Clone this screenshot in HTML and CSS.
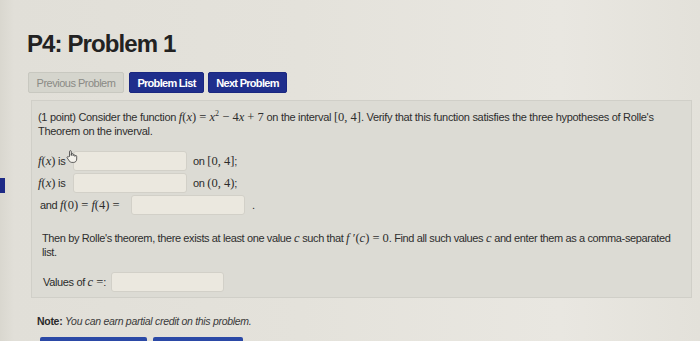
FILE: index.html
```html
<!DOCTYPE html>
<html lang="en">
<head>
<meta charset="utf-8">
<title>P4: Problem 1</title>
<link rel="stylesheet" href="styles.css">
</head>
<body>
<div class="edge-mark"></div>
<div class="page">
  <h1 class="title">P4: Problem 1</h1>
  <div class="nav">
    <span class="btn btn-disabled">Previous Problem</span>
    <span class="btn btn-primary btn-list">Problem List</span>
    <span class="btn btn-primary btn-next">Next Problem</span>
  </div>
  <div class="problem">
    <p class="para">(1 point) Consider the function <span class="m"><i>f</i>(<i>x</i>) = <i>x</i><sup>2</sup> − 4<i>x</i> + 7</span> on the interval <span class="m">[0, 4]</span>. Verify that this function satisfies the three hypotheses of Rolle's<br>Theorem on the inverval.</p>
    <div class="rows">
      <div class="row">
        <span class="lbl lbl-f"><span class="m"><i>f</i>(<i>x</i>)</span> is<svg class="cursor" width="12" height="13" viewBox="0 0 12 13"><path d="M3.5 6.5 V1.6 a0.9 0.9 0 0 1 1.8 0 V5.5 V4.4 a0.9 0.9 0 0 1 1.8 0 V5.6 a0.9 0.9 0 0 1 1.8 0 V6.4 a0.9 0.9 0 0 1 1.8 0 V9 c0 2 -1.2 3.4 -3 3.4 H5.6 c-1 0 -1.6 -0.5 -2.2 -1.3 L1.2 7.9 a0.9 0.9 0 0 1 1.4 -1.1 Z" fill="#f4f2ec" stroke="#3a3a3a" stroke-width="0.8"/></svg></span>
        <span class="ans ans-wide"></span>
        <span class="after">on <span class="m">[0, 4]</span>;</span>
      </div>
      <div class="row">
        <span class="lbl lbl-f"><span class="m"><i>f</i>(<i>x</i>)</span> is</span>
        <span class="ans ans-wide"></span>
        <span class="after">on <span class="m">(0, 4)</span>;</span>
      </div>
      <div class="row">
        <span class="lbl lbl-and">and <span class="m"><i>f</i>(0) = <i>f</i>(4) =</span></span>
        <span class="ans ans-wide"></span>
        <span class="after dot">.</span>
      </div>
    </div>
    <p class="para para-2">Then by Rolle's theorem, there exists at least one value <span class="m"><i>c</i></span> such that <span class="m"><i>f</i> ′(<i>c</i>) = 0</span>. Find all such values <span class="m"><i>c</i></span> and enter them as a comma-separated<br>list.</p>
    <div class="row row-values">
      <span class="lbl">Values of <span class="m"><i>c</i> =</span>:</span>
      <span class="ans ans-values"></span>
    </div>
  </div>
  <p class="note"><b>Note:</b> <i>You can earn partial credit on this problem.</i></p>
  <div class="actions">
    <span class="abtn abtn-1"></span>
    <span class="abtn abtn-2"></span>
  </div>
</div>
</body>
</html>
```
FILE: styles.css
```css
html, body {
  margin: 0;
  padding: 0;
}
body {
  width: 700px;
  height: 341px;
  overflow: hidden;
  background: linear-gradient(90deg, #d9d7cf 0px, #e1dfd8 14px, #e4e2db 300px, #e9e7e1 560px, #e3e1da 700px);
  font-family: "Liberation Sans", Arial, sans-serif;
  color: #2b2b2b;
  position: relative;
}
.edge-mark {
  position: absolute;
  left: 0;
  top: 178px;
  width: 5px;
  height: 15px;
  background: #1d2a86;
}
.page {
  padding: 30px 0 0 27px;
}
.title {
  margin: 0;
  font-size: 24px;
  line-height: 28px;
  font-weight: bold;
  letter-spacing: -0.9px;
  color: #222;
}
.nav {
  display: flex;
  gap: 5px;
  margin-top: 14px;
  margin-left: 1px;
}
.btn {
  height: 21px;
  box-sizing: border-box;
  display: flex;
  align-items: center;
  justify-content: center;
  padding: 0;
  font-size: 11px;
  border-radius: 2px;
}
.btn-disabled {
  background: #d5d5cd;
  border: 1px solid #c8c8c0;
  color: #8a8a85;
  width: 96px;
  letter-spacing: -0.5px;
}
.btn-primary {
  background: #1f2e8c;
  border: 1px solid #1a2780;
  color: #fff;
  font-weight: bold;
  letter-spacing: -0.7px;
}
.btn-list {
  width: 75px;
}
.btn-next {
  width: 79px;
  margin-left: -1px;
}
.problem {
  margin: 7px 8px 0 4px;
  background: #dcdbd4;
  border: 1px solid #d0cfc8;
  padding: 9px 6px 5px 6px;
  width: 647px;
}
.para {
  margin: 0;
  font-size: 11px;
  line-height: 14px;
  letter-spacing: -0.3px;
  color: #2e2e2e;
}
.m {
  font-family: "Liberation Serif", "Times New Roman", serif;
  font-size: 12.5px;
  letter-spacing: 0;
}
.m sup {
  font-size: 8px;
  line-height: 0;
}
.rows {
  margin-top: 13px;
  display: flex;
  flex-direction: column;
  gap: 2px;
}
.row {
  display: flex;
  align-items: center;
  height: 20px;
  font-size: 11px;
  letter-spacing: -0.35px;
}
.lbl {
  position: relative;
}
.lbl-f {
  width: 35px;
}
.lbl-and {
  margin-left: 2px;
  width: 91px;
}
.cursor {
  position: absolute;
  left: 28px;
  top: -4px;
}
.ans {
  display: block;
  height: 20px;
  box-sizing: border-box;
  background: #ebe8df;
  border: 1px solid #d2d0c8;
  border-radius: 3px;
}
.ans-wide {
  width: 114px;
}
.after {
  margin-left: 6px;
}
.dot {
  margin-left: 7px;
}
.para-2 {
  margin-top: 16px;
  margin-left: 4px;
  letter-spacing: -0.38px;
}
.row-values {
  margin-top: 13px;
  margin-left: 5px;
}
.row-values .lbl {
  width: 68px;
}
.ans-values {
  width: 113px;
}
.note {
  margin: 16px 0 0 10px;
  font-size: 10.5px;
  line-height: 14px;
  letter-spacing: -0.3px;
  color: #2a2a2a;
}
.note i {
  color: #3a3a3a;
}
.actions {
  display: flex;
  gap: 6px;
  margin: 9px 0 0 13px;
}
.abtn {
  display: block;
  height: 22px;
  background: #2b49a6;
  border-radius: 2px;
}
.abtn-1 { width: 107px; }
.abtn-2 { width: 90px; }
```
